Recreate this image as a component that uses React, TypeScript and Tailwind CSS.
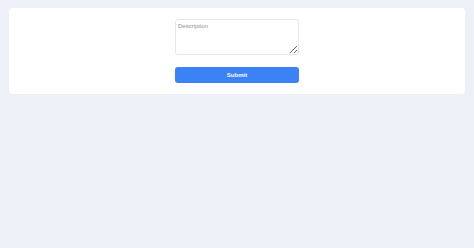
import React from "react";

export default function App() {
  return (
    <div className="min-h-[248px] w-full bg-[#edf1f7] pt-[8px] px-[9px] font-['Liberation_Sans',Arial,sans-serif]">
      {/* Form card */}
      <div className="bg-white rounded-[4px] pt-[11px] pb-[11px] flex flex-col items-center">
        <textarea
          placeholder="Description"
          className="w-[124px] h-[36px] border border-[#e3e7ec] rounded-[3px] px-[2px] py-[2px] text-[6px] leading-[8px] text-gray-700 placeholder:text-[#8a8f98] focus:outline-none"
        />
        <button className="mt-[12px] w-[124px] h-[16px] rounded-[3px] bg-[#3b82f6] text-white text-[6px] font-bold">
          Submit
        </button>
      </div>
    </div>
  );
}
